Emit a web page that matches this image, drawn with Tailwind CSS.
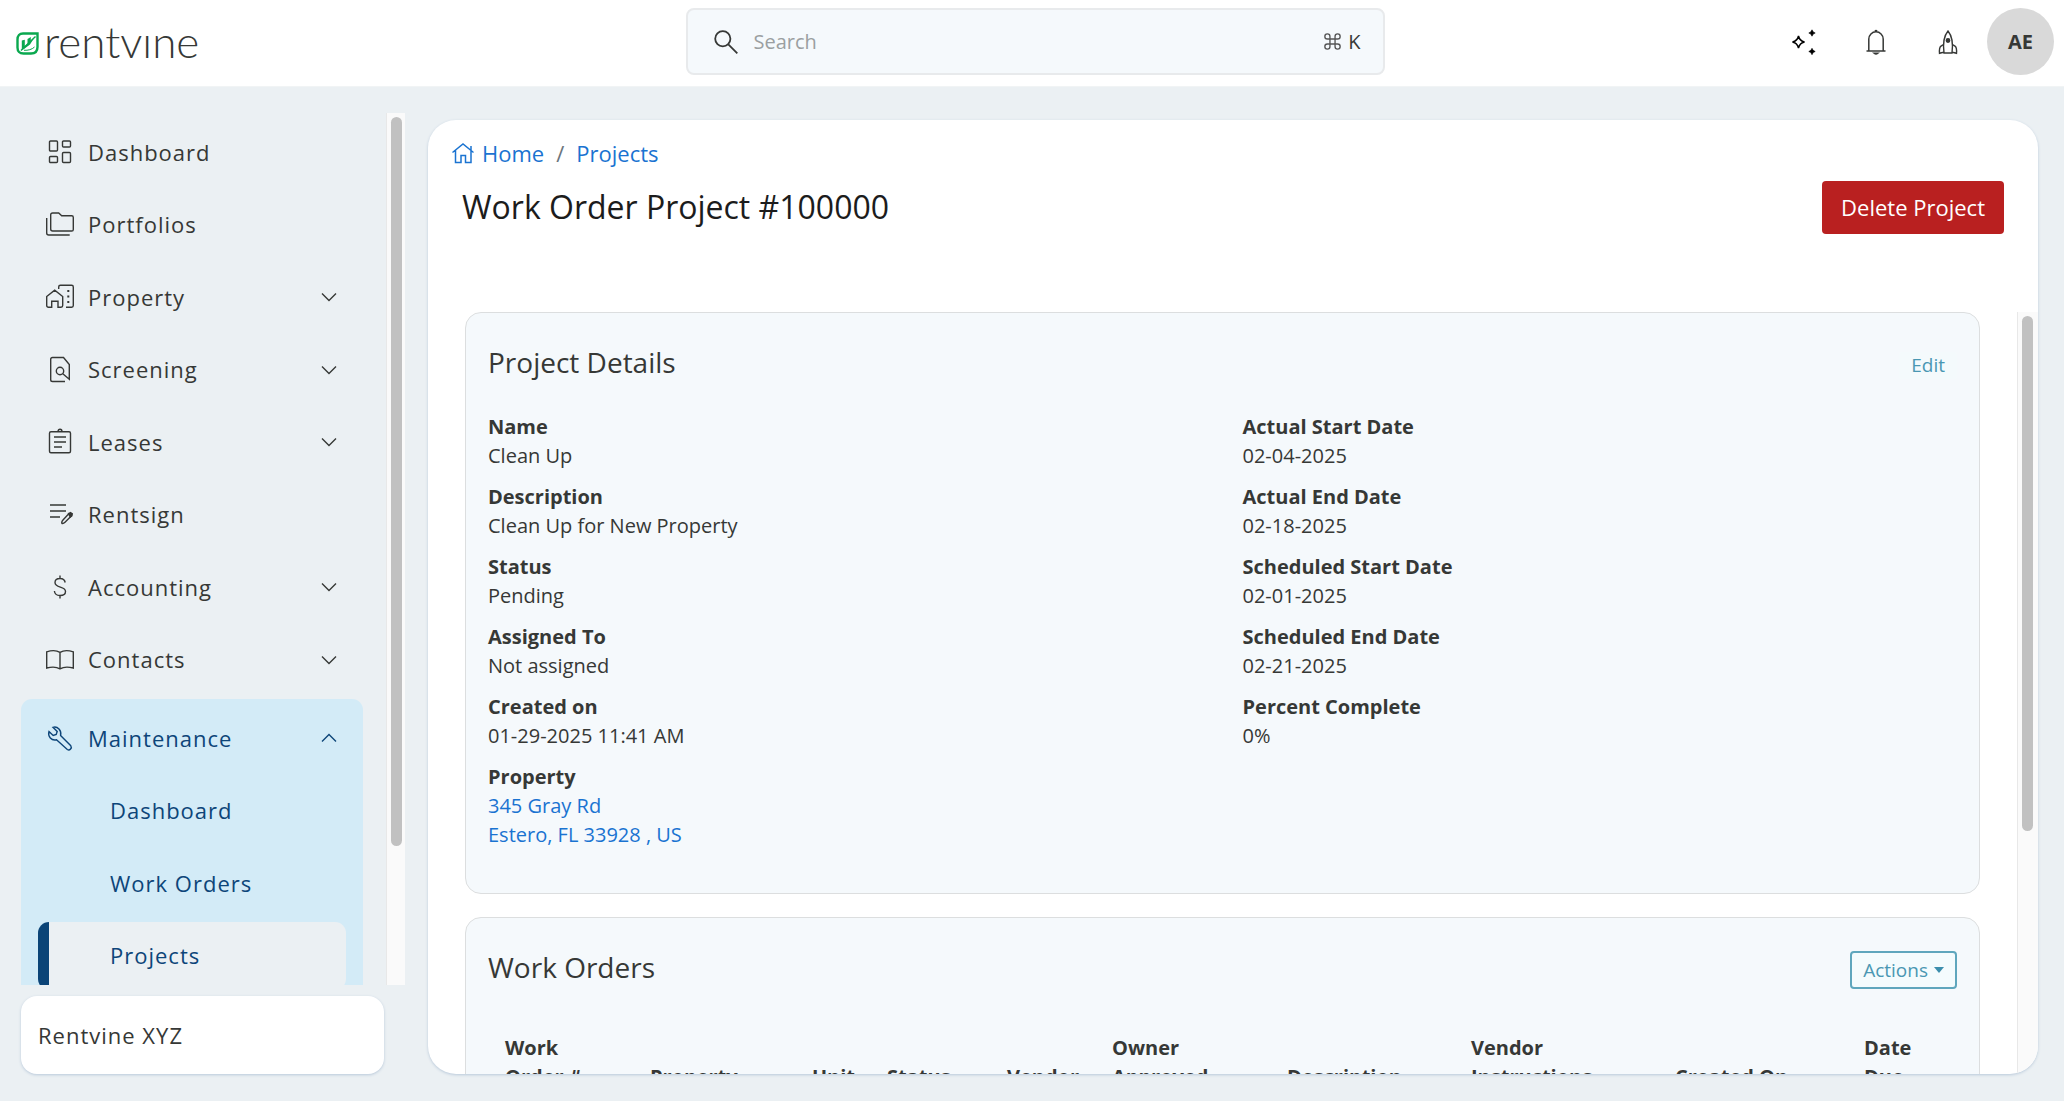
<!DOCTYPE html>
<html lang="en">
<head>
<meta charset="utf-8">
<meta name="viewport" content="width=device-width, initial-scale=1">
<title>Work Order Project #100000</title>
<script src="https://cdn.jsdelivr.net/npm/@tailwindcss/browser@4"></script>
</head>
<body class="flex h-screen flex-col overflow-hidden bg-[#ebf0f3] font-['Open_Sans',sans-serif] text-xl text-[#363836]">

<svg class="hidden" aria-hidden="true">
  <symbol id="chev" viewBox="0 0 16 16"><path d="M1 4.500l7 7 7-7" fill="none" stroke="currentColor" stroke-width="1.400"/></symbol>
</svg>

<header class="flex h-[87px] shrink-0 items-center border-b border-[#f1f4f5] bg-white pt-0 pr-[10px] pb-[3px] pl-4">
  <div class="flex flex-1">
    <a href="#" class="flex items-center gap-[5px]" aria-label="Home page">
      <svg class="mt-1 size-[23px]" viewBox="0 0 23 23" fill="none" stroke="#0aa84f">
        <path d="M7 1.500h14.500V15c0 4-2.500 6.500-6.500 6.500H7.500c-4 0-6-2-6-6V7.500c0-4 2-6 5.500-6z" stroke-width="2.400"/>
        <path d="M5 18.500L19.500 4.500" stroke-width="1.400"/>
        <path d="M5.800 8.500l3-.8v6.200l2.700-2.400V7l3.300-2v4L19 4.500l-5 8-6 4.500-2.200 1z" fill="#0aa84f" stroke="none"/>
        <path d="M8 18.300c4 .2 8-.8 10.500-3.300" stroke-width="1"/>
      </svg>
      <span class="-mt-[2px] font-['Lato',sans-serif] text-[44px] leading-[60px] font-light text-[#363836]">rentvıne</span>
    </a>
  </div>
  <label class="flex h-[67px] w-[699px] shrink items-center rounded-lg border-2 border-[#e8eaec] bg-[#f5f9fc] pr-[22px] pl-[26px]">
    <svg class="size-6 shrink-0" viewBox="0 0 24 24" fill="none" stroke="#363836" stroke-width="1.800"><circle cx="8.800" cy="8.800" r="7.600"/><path d="M14.300 14.300l9 9"/></svg>
    <input type="text" placeholder="Search" aria-label="Search" class="ml-4 min-w-0 flex-1 bg-transparent text-xl outline-none placeholder:text-[#9b9fa1]">
    <svg class="mr-[7px] size-[17px]" viewBox="0 0 24 24" fill="none" stroke="#555" stroke-width="1.600"><path d="M9 6v12a3 3 0 1 1-3-3h12a3 3 0 1 1-3 3V6a3 3 0 1 1 3 3H6a3 3 0 1 1 3-3z" transform="translate(-2.400 -2.400) scale(1.200)"/></svg>
    <kbd class="font-['Open_Sans',sans-serif] text-xl">K</kbd>
  </label>
  <div class="flex flex-1 items-center justify-end gap-6">
    <button type="button" aria-label="Assistant" class="flex w-12 justify-center text-black">
      <svg class="size-[26px]" viewBox="0 0 26 26"><path d="M7.500 7Q8.600 11.900 13.500 13 8.600 14.100 7.500 19 6.400 14.100 1.500 13 6.400 11.900 7.500 7z" fill="none" stroke="currentColor" stroke-width="1.500"/><path d="M21 .8q.8 2.700 3.200 3.200-2.400.5-3.200 3.200-.8-2.700-3.200-3.200 2.400-.5 3.200-3.200zM21 19.300q.8 2.700 3.200 3.200-2.400.5-3.200 3.200-.8-2.700-3.200-3.200 2.400-.5 3.200-3.200z" fill="currentColor" stroke="currentColor" stroke-width=".6"/></svg>
    </button>
    <button type="button" aria-label="Notifications" class="flex w-12 justify-center">
      <svg class="size-[26px]" viewBox="0 0 26 26" fill="none" stroke="currentColor" stroke-width="1.500"><path d="M3.500 22h19M5.800 22V10a7.200 7.200 0 0 1 14.400 0v12M12 2.200q1-1.600 2 0M11.200 24.200q1.800 1.400 3.600 0z"/></svg>
    </button>
    <button type="button" aria-label="What's new" class="-mr-[9px] flex w-12 justify-center">
      <svg class="size-[26px]" viewBox="0 0 26 26" fill="none" stroke="currentColor" stroke-width="1.400"><path d="M9 24C8 16.500 8 8 13 2c5 6 5 14.500 4 22zM8.400 15.500l-2.400 1.600c-1.400 1-1.800 3.600-1.500 7.200l4-1M17.600 15.500l2.400 1.600c1.400 1 1.800 3.600 1.500 7.200l-4-1"/><circle cx="13" cy="11.500" r="1.700" fill="currentColor"/></svg>
    </button>
    <button type="button" class="size-[67px] shrink-0 rounded-full bg-[#d9d9d9] text-xl font-bold">AE</button>
  </div>
</header>

<div class="flex min-h-0 flex-1">
  <aside class="flex w-[405px] shrink-0 flex-col pt-[26px] pb-[27px] text-[22px] tracking-[1px]">
    <div class="flex min-h-0 flex-1">
      <nav class="min-w-0 flex-1 overflow-hidden pt-[3px] pr-[23px] pl-[21px]">
        <ul class="grid h-[580px] grid-rows-8">
          <li class="grid"><a href="#" class="flex items-center gap-[14px] pr-[26px] pl-[25px]">
            <svg class="size-7" viewBox="0 0 28 28" fill="none" stroke="currentColor" stroke-width="1.400"><rect x="3.500" y="3" width="8" height="10" rx="1"/><rect x="16.500" y="3" width="8" height="6" rx="1"/><rect x="3.500" y="18.500" width="8" height="6" rx="1"/><rect x="16.500" y="14.500" width="8" height="10" rx="1"/></svg>
            <span>Dashboard</span></a></li>
          <li class="grid"><a href="#" class="flex items-center gap-[14px] pr-[26px] pl-[25px]">
            <svg class="size-7" viewBox="0 0 28 28" fill="none" stroke="currentColor" stroke-width="1.400"><path d="M4.700 4q0-2 2-2h6l3 2.800h10q1.600 0 1.600 1.600v12q0 1.600-1.600 1.600h-19q-2 0-2-2zM.7 7v15q0 2 2 2h21"/></svg>
            <span>Portfolios</span></a></li>
          <li class="grid"><button type="button" class="flex items-center gap-[14px] pr-[26px] pl-[25px] text-left">
            <svg class="size-7" viewBox="0 0 28 28" fill="none" stroke="currentColor" stroke-width="1.400"><path d="M12.700 6V4q0-1.700 1.700-1.700h11.200q1.700 0 1.700 1.700v18.500q0 1.700-1.700 1.700H20M.7 13.500l8-6.300 8 6.300v9q0 1.700-1.700 1.700h-3v-6H5.700v6H2.500q-1.800 0-1.800-1.700z"/><path d="M22.300 7v2M22.300 12.500v2M22.300 18v2" stroke-width="2"/></svg>
            <span class="flex-1">Property</span><svg class="size-4"><use href="#chev"/></svg></button></li>
          <li class="grid"><button type="button" class="flex items-center gap-[14px] pr-[26px] pl-[25px] text-left">
            <svg class="size-7" viewBox="0 0 28 28" fill="none" stroke="currentColor" stroke-width="1.400"><path d="M19 25.500H6.500q-1.800 0-1.800-1.800V3.300q0-1.800 1.800-1.800h11l5.800 7v14.700l-6.500-5.500M19 17"/><circle cx="14" cy="15" r="3.700"/></svg>
            <span class="flex-1">Screening</span><svg class="size-4"><use href="#chev"/></svg></button></li>
          <li class="grid"><button type="button" class="flex items-center gap-[14px] pr-[26px] pl-[25px] text-left">
            <svg class="size-7" viewBox="0 0 28 28" fill="none" stroke="currentColor" stroke-width="1.400"><rect x="3.500" y="3.700" width="21" height="21" rx="1.500"/><path d="M12 3.700c0-3.300 4-3.300 4 0M8 9h12M8 14h12M8 19h8"/></svg>
            <span class="flex-1">Leases</span><svg class="size-4"><use href="#chev"/></svg></button></li>
          <li class="grid"><a href="#" class="flex items-center gap-[14px] pr-[26px] pl-[25px]">
            <svg class="size-7" viewBox="0 0 28 28" fill="none" stroke="currentColor" stroke-width="1.400"><path d="M4 4h16M4 10h16M4 16h10M17 19l6-6.500 2.500 2.300-6.500 6.500q-1.500 1.500-3 1.200-.8-1.500 1-3.500z"/><path d="M22.500 12.800l2-1.200 1.800 1.200-.5 2-1.500 1.200z" fill="currentColor"/></svg>
            <span>Rentsign</span></a></li>
          <li class="grid"><button type="button" class="flex items-center gap-[14px] pr-[26px] pl-[25px] text-left">
            <svg class="size-7" viewBox="0 0 28 28" fill="none" stroke="currentColor" stroke-width="1.400"><path d="M14 2.500v3M14 22.500v3M19.200 9.500c-.5-2.700-2.500-4-5.200-4-2.900 0-5 1.500-5 4 0 6 10.500 3.200 10.500 9 0 2.500-2.300 4-5.500 4-3.300 0-5.300-1.500-5.600-4.500"/></svg>
            <span class="flex-1">Accounting</span><svg class="size-4"><use href="#chev"/></svg></button></li>
          <li class="grid"><button type="button" class="flex items-center gap-[14px] pr-[26px] pl-[25px] text-left">
            <svg class="size-7" viewBox="0 0 28 28" fill="none" stroke="currentColor" stroke-width="1.400"><path d="M14 6.300C10.500 4.300 5.500 4.300.7 5.800V22c4.800-1.200 9.800-1.200 13.300.8 3.500-2 8.500-2 13.300-.8V5.800C22.500 4.300 17.500 4.300 14 6.300zM14 6.300v16.500"/></svg>
            <span class="flex-1">Contacts</span><svg class="size-4"><use href="#chev"/></svg></button></li>
        </ul>
        <div class="mt-[3px] rounded-[11px] bg-[#d3ebf7] py-[3px] text-[#0d4579]">
          <ul class="grid h-[290px] grid-rows-4">
            <li class="grid"><button type="button" aria-expanded="true" class="flex items-center gap-[14px] pr-[26px] pl-[25px] text-left">
              <svg class="size-7" viewBox="0 0 28 28" fill="none" stroke="currentColor" stroke-width="1.400"><path d="M3 7.500c-1.500 5 2.500 9.500 7.500 8.300L21.300 25.500c2.500 1.500 5-1.500 3.500-3.700L14.600 11.500c1.200-5-3-9.500-7.600-8.200l4.200 4.200-1 3-3 1z"/></svg>
              <span class="flex-1">Maintenance</span><svg class="size-4 rotate-180"><use href="#chev"/></svg></button></li>
            <li class="grid px-[17px] py-[2px]"><a href="#" class="flex items-center border-l-[11px] border-transparent pl-[61px]">Dashboard</a></li>
            <li class="grid px-[17px] py-[2px]"><a href="#" class="flex items-center border-l-[11px] border-transparent pl-[61px]">Work Orders</a></li>
            <li class="grid px-[17px] py-[2px]"><a href="#" aria-current="page" class="flex items-center rounded-[11px] border-l-[11px] border-[#0b4477] bg-[#ebf0f3] pl-[61px]">Projects</a></li>
          </ul>
        </div>
      </nav>
      <div class="w-[19px] border-l border-[#e8e8e8] bg-[#fafafa] pt-1 pl-1" aria-hidden="true"><div class="h-[84%] w-[11px] rounded-full bg-[#c1c1c1]"></div></div>
    </div>
    <div class="mt-[11px] mr-[21px] ml-[21px] flex h-[78px] shrink-0 items-center rounded-[16px] bg-white pl-[17px] shadow-[0_1px_3px_#b9c9da]">Rentvine XYZ</div>
  </aside>

  <main class="mt-[33px] mr-[26px] mb-[27px] ml-[23px] flex min-w-0 flex-1 flex-col overflow-hidden rounded-[28px] bg-white pt-4 shadow-[0_1px_3px_#b9c9da]">
    <nav aria-label="Breadcrumb" class="flex h-[34px] shrink-0 items-center pl-6 text-[22px] text-[#1a73d1]">
      <a href="#" class="flex items-center gap-2">
        <svg class="size-[22px]" viewBox="0 0 22 22" fill="none" stroke="currentColor" stroke-width="1.500"><path d="M.5 10.500L11 2l10.500 8.500M3.500 8.500v12H9v-7h4.500v7h5.500v-12M19 8V4"/></svg>
        Home</a>
      <span class="px-3 text-[#6c757d]">/</span>
      <a href="#">Projects</a>
    </nav>
    <div class="mt-[11px] flex h-[53px] shrink-0 items-center justify-between pr-[34px] pl-[34px]">
      <h1 class="text-[32px] text-[#1c1c1c]">Work Order Project #100000</h1>
      <button type="button" class="h-[53px] rounded bg-[#b92020] px-[19px] text-[22px] text-white">Delete Project</button>
    </div>

    <div class="mt-[78px] flex min-h-0 flex-1">
      <div class="min-w-0 flex-1 overflow-hidden px-[37px]">
        <section class="rounded-[16px] border border-[#dcdedf] bg-[#f5f9fc] px-[22px] pt-[30px] pb-[44px]">
          <div class="flex h-10 items-center justify-between">
            <h2 class="text-[28px]">Project Details</h2>
            <button type="button" class="mt-[5px] rounded bg-[#f4fafc] px-3 text-[19px] text-[#4a97b3]">Edit</button>
          </div>
          <div class="mt-[29px] grid grid-cols-2 gap-x-10 leading-[29px]">
            <dl class="grid content-start gap-3">
              <div><dt class="font-bold">Name</dt><dd>Clean Up</dd></div>
              <div><dt class="font-bold">Description</dt><dd>Clean Up for New Property</dd></div>
              <div><dt class="font-bold">Status</dt><dd>Pending</dd></div>
              <div><dt class="font-bold">Assigned To</dt><dd>Not assigned</dd></div>
              <div><dt class="font-bold">Created on</dt><dd>01-29-2025 11:41 AM</dd></div>
              <div><dt class="font-bold">Property</dt><dd><a href="#" class="text-[#1a73d1]">345 Gray Rd<br>Estero, FL 33928 , US</a></dd></div>
            </dl>
            <dl class="grid content-start gap-3">
              <div><dt class="font-bold">Actual Start Date</dt><dd>02-04-2025</dd></div>
              <div><dt class="font-bold">Actual End Date</dt><dd>02-18-2025</dd></div>
              <div><dt class="font-bold">Scheduled Start Date</dt><dd>02-01-2025</dd></div>
              <div><dt class="font-bold">Scheduled End Date</dt><dd>02-21-2025</dd></div>
              <div><dt class="font-bold">Percent Complete</dt><dd>0%</dd></div>
            </dl>
          </div>
        </section>

        <section class="mt-[23px] rounded-[16px] border border-[#dcdedf] bg-[#f5f9fc] px-[22px] pt-[30px] pb-[44px]">
          <div class="flex h-10 items-center justify-between">
            <h2 class="text-[28px]">Work Orders</h2>
            <button type="button" class="mt-1 flex h-[38px] items-center gap-[6px] rounded border-2 border-[#5fa6bd] bg-[#f4fbfd] px-[11px] text-[19px] text-[#4a97b3]">Actions
              <span class="border-x-[5px] border-t-[6px] border-x-transparent border-t-[#3c8ead]"></span></button>
          </div>
          <table class="mt-[29px] w-full table-fixed text-left leading-[29px]">
            <colgroup><col class="w-[145px]"><col class="w-[162px]"><col class="w-[75px]"><col class="w-[120px]"><col class="w-[105px]"><col class="w-[175px]"><col class="w-[184px]"><col class="w-[204px]"><col class="w-[189px]"><col></colgroup>
            <thead><tr class="align-bottom">
              <th scope="col" class="py-4 pl-[17px]">Work<br>Order #</th>
              <th scope="col" class="py-4 pl-[17px]">Property</th>
              <th scope="col" class="py-4 pl-[17px]">Unit</th>
              <th scope="col" class="py-4 pl-[17px]">Status</th>
              <th scope="col" class="py-4 pl-[17px]">Vendor</th>
              <th scope="col" class="py-4 pl-[17px]">Owner<br>Approved</th>
              <th scope="col" class="py-4 pl-[17px]">Description</th>
              <th scope="col" class="py-4 pl-[17px]">Vendor<br>Instructions</th>
              <th scope="col" class="py-4 pl-[17px]">Created On</th>
              <th scope="col" class="py-4 pl-[17px]">Date<br>Due</th>
            </tr></thead>
          </table>
        </section>
      </div>
      <div class="w-[21px] shrink-0 border-l border-[#e8e8e8] bg-[#fafafa] pt-1 pl-1" aria-hidden="true"><div class="h-[68%] w-[11px] rounded-full bg-[#c1c1c1]"></div></div>
    </div>
  </main>
</div>
</body>
</html>
